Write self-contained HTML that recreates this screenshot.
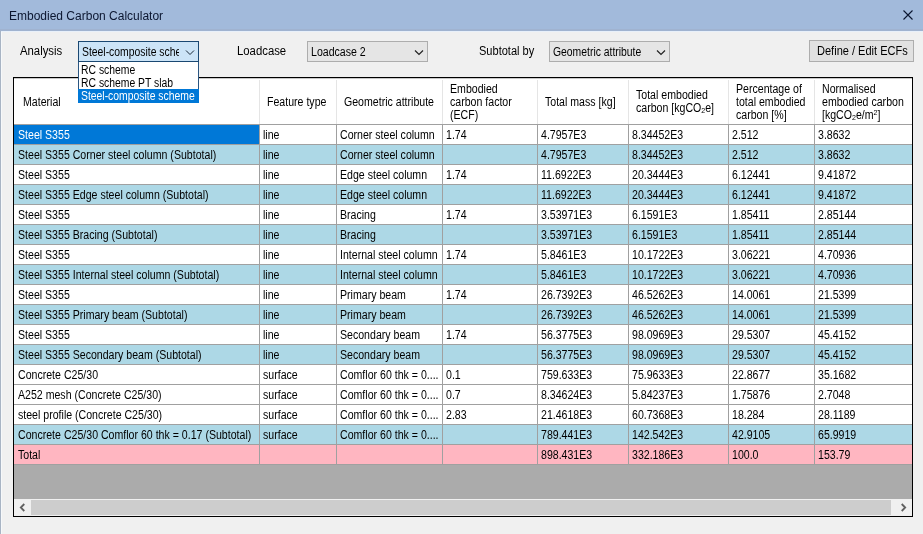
<!DOCTYPE html><html><head><meta charset="utf-8"><title>Embodied Carbon Calculator</title><style>
*{margin:0;padding:0;box-sizing:border-box}
html,body{width:923px;height:534px;overflow:hidden}
body{position:relative;background:#f0f0f0;font-family:"Liberation Sans",sans-serif;font-size:12px;color:#000}
.a{position:absolute}
.t{position:absolute;white-space:nowrap;transform-origin:0 0;transform:scaleX(0.882)}
.sub{font-size:8px;position:relative;top:1px;line-height:0;vertical-align:baseline}
.sup{font-size:8px;position:relative;top:-4px;line-height:0;vertical-align:baseline}
</style></head><body><div id="root" style="position:absolute;left:0;top:0;width:923px;height:534px;will-change:transform">
<div class="a" style="left:0;top:0;width:923px;height:31px;background:#a2badb"></div><div class="a" style="left:0;top:29px;width:923px;height:2px;background:#a0b3d0"></div>
<div class="a" style="left:0;top:31px;width:923px;height:1px;background:#e8f0fa"></div>
<div class="a" style="left:0;top:31px;width:1px;height:503px;background:#a8b4c4"></div>
<div class="a" style="left:1px;top:32px;width:1px;height:502px;background:#f6f8fa"></div>
<div class="a" style="left:9px;top:8px;line-height:16px;font-size:12px;color:#0b1630;white-space:nowrap">Embodied Carbon Calculator</div>
<svg class="a" style="left:900px;top:8px" width="16" height="14" viewBox="0 0 16 14"><path d="M3.5 2.5 L12.5 11.5 M12.5 2.5 L3.5 11.5" stroke="#0b1630" stroke-width="1.1" fill="none"/></svg>
<div class="t" style="left:20px;top:42px;line-height:19px;transform:scaleX(0.945);">Analysis</div>
<div class="t" style="left:236.5px;top:42px;line-height:19px;transform:scaleX(0.945);">Loadcase</div>
<div class="t" style="left:479px;top:42px;line-height:19px;transform:scaleX(0.92);">Subtotal by</div>
<div class="a" style="left:78px;top:41px;width:121px;height:21px;background:#cce4f7;border:1px solid #1a4872"></div>
<div class="a" style="left:79px;top:42px;width:100px;height:19px;overflow:hidden"><div class="t" style="left:3px;top:0.5px;line-height:19px;transform:scaleX(0.865);">Steel-composite scheme</div></div>
<svg class="a" style="left:185px;top:48.5px" width="10" height="7" viewBox="0 0 10 7"><path d="M1 1.5 L5 5.5 L9 1.5" stroke="#1a2a3a" stroke-width="1.0" fill="none"/></svg>
<div class="a" style="left:307px;top:41px;width:121px;height:21px;background:#e5e5e5;border:1px solid #adadad"></div>
<div class="t" style="left:311px;top:42.5px;line-height:19px;">Loadcase 2</div>
<svg class="a" style="left:414px;top:48.5px" width="10" height="7" viewBox="0 0 10 7"><path d="M1 1.5 L5 5.5 L9 1.5" stroke="#222" stroke-width="1.2" fill="none"/></svg>
<div class="a" style="left:549px;top:41px;width:121px;height:21px;background:#e5e5e5;border:1px solid #adadad"></div>
<div class="t" style="left:553px;top:42.5px;line-height:19px;transform:scaleX(0.865);">Geometric attribute</div>
<svg class="a" style="left:656px;top:48.5px" width="10" height="7" viewBox="0 0 10 7"><path d="M1 1.5 L5 5.5 L9 1.5" stroke="#222" stroke-width="1.2" fill="none"/></svg>
<div class="a" style="left:809px;top:40px;width:105px;height:22px;background:#e1e1e1;border:1px solid #adadad"></div>
<div class="t" style="left:816.8px;top:41px;line-height:20px;transform:scaleX(0.92);">Define / Edit ECFs</div>
<div class="a" style="left:13px;top:77px;width:900px;height:440px;border:1px solid #000;background:#ababab"></div>
<div class="a" style="left:14px;top:78px;width:898px;height:46px;background:#fff"></div>
<div class="a" style="left:14px;top:78px;width:898px;height:1px;background:#c8c8c8"></div>
<div class="a" style="left:14px;top:124px;width:898px;height:1px;background:#a0a0a0"></div>
<div class="a" style="left:259px;top:80px;width:1px;height:44px;background:#e5e5e5"></div>
<div class="a" style="left:336px;top:80px;width:1px;height:44px;background:#e5e5e5"></div>
<div class="a" style="left:442px;top:80px;width:1px;height:44px;background:#e5e5e5"></div>
<div class="a" style="left:537px;top:80px;width:1px;height:44px;background:#e5e5e5"></div>
<div class="a" style="left:628px;top:80px;width:1px;height:44px;background:#e5e5e5"></div>
<div class="a" style="left:728px;top:80px;width:1px;height:44px;background:#e5e5e5"></div>
<div class="a" style="left:814px;top:80px;width:1px;height:44px;background:#e5e5e5"></div>
<div class="t" style="left:22.5px;top:95.6px;line-height:13px;">Material</div>
<div class="t" style="left:267px;top:95.6px;line-height:13px;">Feature type</div>
<div class="t" style="left:344px;top:95.6px;line-height:13px;">Geometric attribute</div>
<div class="t" style="left:450px;top:82.6px;line-height:13px;">Embodied</div>
<div class="t" style="left:450px;top:95.6px;line-height:13px;">carbon factor</div>
<div class="t" style="left:450px;top:108.6px;line-height:13px;">(ECF)</div>
<div class="t" style="left:545px;top:95.6px;line-height:13px;">Total mass [kg]</div>
<div class="t" style="left:636px;top:89.1px;line-height:13px;">Total embodied</div>
<div class="t" style="left:636px;top:102.1px;line-height:13px;">carbon [kgCO<span class=sub>2</span>e]</div>
<div class="t" style="left:736px;top:82.6px;line-height:13px;">Percentage of</div>
<div class="t" style="left:736px;top:95.6px;line-height:13px;">total embodied</div>
<div class="t" style="left:736px;top:108.6px;line-height:13px;">carbon [%]</div>
<div class="t" style="left:822px;top:82.6px;line-height:13px;">Normalised</div>
<div class="t" style="left:822px;top:95.6px;line-height:13px;">embodied carbon</div>
<div class="t" style="left:822px;top:108.6px;line-height:13px;">[kgCO<span class=sub>2</span>e/m<span class=sup>2</span>]</div>
<div class="a" style="left:14px;top:125px;width:898px;height:20px;background:#fff"></div>
<div class="a" style="left:14px;top:144px;width:898px;height:1px;background:#a0a0a0"></div>
<div class="a" style="left:259px;top:125px;width:1px;height:20px;background:#a0a0a0"></div>
<div class="a" style="left:336px;top:125px;width:1px;height:20px;background:#a0a0a0"></div>
<div class="a" style="left:442px;top:125px;width:1px;height:20px;background:#a0a0a0"></div>
<div class="a" style="left:537px;top:125px;width:1px;height:20px;background:#a0a0a0"></div>
<div class="a" style="left:628px;top:125px;width:1px;height:20px;background:#a0a0a0"></div>
<div class="a" style="left:728px;top:125px;width:1px;height:20px;background:#a0a0a0"></div>
<div class="a" style="left:814px;top:125px;width:1px;height:20px;background:#a0a0a0"></div>
<div class="a" style="left:14px;top:125px;width:245px;height:19px;background:#0078d7"></div>
<div class="a" style="left:14px;top:125px;width:245px;height:19px;overflow:hidden"><div class="t" style="left:3.5px;top:1px;line-height:19px;color:#fff;">Steel S355</div></div>
<div class="a" style="left:260px;top:125px;width:76px;height:19px;overflow:hidden"><div class="t" style="left:3px;top:1px;line-height:19px;">line</div></div>
<div class="a" style="left:337px;top:125px;width:105px;height:19px;overflow:hidden"><div class="t" style="left:3px;top:1px;line-height:19px;">Corner steel column</div></div>
<div class="a" style="left:443px;top:125px;width:94px;height:19px;overflow:hidden"><div class="t" style="left:3px;top:1px;line-height:19px;">1.74</div></div>
<div class="a" style="left:538px;top:125px;width:90px;height:19px;overflow:hidden"><div class="t" style="left:3px;top:1px;line-height:19px;">4.7957E3</div></div>
<div class="a" style="left:629px;top:125px;width:99px;height:19px;overflow:hidden"><div class="t" style="left:3px;top:1px;line-height:19px;">8.34452E3</div></div>
<div class="a" style="left:729px;top:125px;width:85px;height:19px;overflow:hidden"><div class="t" style="left:3px;top:1px;line-height:19px;">2.512</div></div>
<div class="a" style="left:815px;top:125px;width:97px;height:19px;overflow:hidden"><div class="t" style="left:3px;top:1px;line-height:19px;">3.8632</div></div>
<div class="a" style="left:14px;top:145px;width:898px;height:20px;background:#add8e6"></div>
<div class="a" style="left:14px;top:164px;width:898px;height:1px;background:#a0a0a0"></div>
<div class="a" style="left:259px;top:145px;width:1px;height:20px;background:#a0a0a0"></div>
<div class="a" style="left:336px;top:145px;width:1px;height:20px;background:#a0a0a0"></div>
<div class="a" style="left:442px;top:145px;width:1px;height:20px;background:#a0a0a0"></div>
<div class="a" style="left:537px;top:145px;width:1px;height:20px;background:#a0a0a0"></div>
<div class="a" style="left:628px;top:145px;width:1px;height:20px;background:#a0a0a0"></div>
<div class="a" style="left:728px;top:145px;width:1px;height:20px;background:#a0a0a0"></div>
<div class="a" style="left:814px;top:145px;width:1px;height:20px;background:#a0a0a0"></div>
<div class="a" style="left:14px;top:145px;width:245px;height:19px;overflow:hidden"><div class="t" style="left:3.5px;top:1px;line-height:19px;">Steel S355 Corner steel column (Subtotal)</div></div>
<div class="a" style="left:260px;top:145px;width:76px;height:19px;overflow:hidden"><div class="t" style="left:3px;top:1px;line-height:19px;">line</div></div>
<div class="a" style="left:337px;top:145px;width:105px;height:19px;overflow:hidden"><div class="t" style="left:3px;top:1px;line-height:19px;">Corner steel column</div></div>
<div class="a" style="left:538px;top:145px;width:90px;height:19px;overflow:hidden"><div class="t" style="left:3px;top:1px;line-height:19px;">4.7957E3</div></div>
<div class="a" style="left:629px;top:145px;width:99px;height:19px;overflow:hidden"><div class="t" style="left:3px;top:1px;line-height:19px;">8.34452E3</div></div>
<div class="a" style="left:729px;top:145px;width:85px;height:19px;overflow:hidden"><div class="t" style="left:3px;top:1px;line-height:19px;">2.512</div></div>
<div class="a" style="left:815px;top:145px;width:97px;height:19px;overflow:hidden"><div class="t" style="left:3px;top:1px;line-height:19px;">3.8632</div></div>
<div class="a" style="left:14px;top:165px;width:898px;height:20px;background:#fff"></div>
<div class="a" style="left:14px;top:184px;width:898px;height:1px;background:#a0a0a0"></div>
<div class="a" style="left:259px;top:165px;width:1px;height:20px;background:#a0a0a0"></div>
<div class="a" style="left:336px;top:165px;width:1px;height:20px;background:#a0a0a0"></div>
<div class="a" style="left:442px;top:165px;width:1px;height:20px;background:#a0a0a0"></div>
<div class="a" style="left:537px;top:165px;width:1px;height:20px;background:#a0a0a0"></div>
<div class="a" style="left:628px;top:165px;width:1px;height:20px;background:#a0a0a0"></div>
<div class="a" style="left:728px;top:165px;width:1px;height:20px;background:#a0a0a0"></div>
<div class="a" style="left:814px;top:165px;width:1px;height:20px;background:#a0a0a0"></div>
<div class="a" style="left:14px;top:165px;width:245px;height:19px;overflow:hidden"><div class="t" style="left:3.5px;top:1px;line-height:19px;">Steel S355</div></div>
<div class="a" style="left:260px;top:165px;width:76px;height:19px;overflow:hidden"><div class="t" style="left:3px;top:1px;line-height:19px;">line</div></div>
<div class="a" style="left:337px;top:165px;width:105px;height:19px;overflow:hidden"><div class="t" style="left:3px;top:1px;line-height:19px;">Edge steel column</div></div>
<div class="a" style="left:443px;top:165px;width:94px;height:19px;overflow:hidden"><div class="t" style="left:3px;top:1px;line-height:19px;">1.74</div></div>
<div class="a" style="left:538px;top:165px;width:90px;height:19px;overflow:hidden"><div class="t" style="left:3px;top:1px;line-height:19px;">11.6922E3</div></div>
<div class="a" style="left:629px;top:165px;width:99px;height:19px;overflow:hidden"><div class="t" style="left:3px;top:1px;line-height:19px;">20.3444E3</div></div>
<div class="a" style="left:729px;top:165px;width:85px;height:19px;overflow:hidden"><div class="t" style="left:3px;top:1px;line-height:19px;">6.12441</div></div>
<div class="a" style="left:815px;top:165px;width:97px;height:19px;overflow:hidden"><div class="t" style="left:3px;top:1px;line-height:19px;">9.41872</div></div>
<div class="a" style="left:14px;top:185px;width:898px;height:20px;background:#add8e6"></div>
<div class="a" style="left:14px;top:204px;width:898px;height:1px;background:#a0a0a0"></div>
<div class="a" style="left:259px;top:185px;width:1px;height:20px;background:#a0a0a0"></div>
<div class="a" style="left:336px;top:185px;width:1px;height:20px;background:#a0a0a0"></div>
<div class="a" style="left:442px;top:185px;width:1px;height:20px;background:#a0a0a0"></div>
<div class="a" style="left:537px;top:185px;width:1px;height:20px;background:#a0a0a0"></div>
<div class="a" style="left:628px;top:185px;width:1px;height:20px;background:#a0a0a0"></div>
<div class="a" style="left:728px;top:185px;width:1px;height:20px;background:#a0a0a0"></div>
<div class="a" style="left:814px;top:185px;width:1px;height:20px;background:#a0a0a0"></div>
<div class="a" style="left:14px;top:185px;width:245px;height:19px;overflow:hidden"><div class="t" style="left:3.5px;top:1px;line-height:19px;">Steel S355 Edge steel column (Subtotal)</div></div>
<div class="a" style="left:260px;top:185px;width:76px;height:19px;overflow:hidden"><div class="t" style="left:3px;top:1px;line-height:19px;">line</div></div>
<div class="a" style="left:337px;top:185px;width:105px;height:19px;overflow:hidden"><div class="t" style="left:3px;top:1px;line-height:19px;">Edge steel column</div></div>
<div class="a" style="left:538px;top:185px;width:90px;height:19px;overflow:hidden"><div class="t" style="left:3px;top:1px;line-height:19px;">11.6922E3</div></div>
<div class="a" style="left:629px;top:185px;width:99px;height:19px;overflow:hidden"><div class="t" style="left:3px;top:1px;line-height:19px;">20.3444E3</div></div>
<div class="a" style="left:729px;top:185px;width:85px;height:19px;overflow:hidden"><div class="t" style="left:3px;top:1px;line-height:19px;">6.12441</div></div>
<div class="a" style="left:815px;top:185px;width:97px;height:19px;overflow:hidden"><div class="t" style="left:3px;top:1px;line-height:19px;">9.41872</div></div>
<div class="a" style="left:14px;top:205px;width:898px;height:20px;background:#fff"></div>
<div class="a" style="left:14px;top:224px;width:898px;height:1px;background:#a0a0a0"></div>
<div class="a" style="left:259px;top:205px;width:1px;height:20px;background:#a0a0a0"></div>
<div class="a" style="left:336px;top:205px;width:1px;height:20px;background:#a0a0a0"></div>
<div class="a" style="left:442px;top:205px;width:1px;height:20px;background:#a0a0a0"></div>
<div class="a" style="left:537px;top:205px;width:1px;height:20px;background:#a0a0a0"></div>
<div class="a" style="left:628px;top:205px;width:1px;height:20px;background:#a0a0a0"></div>
<div class="a" style="left:728px;top:205px;width:1px;height:20px;background:#a0a0a0"></div>
<div class="a" style="left:814px;top:205px;width:1px;height:20px;background:#a0a0a0"></div>
<div class="a" style="left:14px;top:205px;width:245px;height:19px;overflow:hidden"><div class="t" style="left:3.5px;top:1px;line-height:19px;">Steel S355</div></div>
<div class="a" style="left:260px;top:205px;width:76px;height:19px;overflow:hidden"><div class="t" style="left:3px;top:1px;line-height:19px;">line</div></div>
<div class="a" style="left:337px;top:205px;width:105px;height:19px;overflow:hidden"><div class="t" style="left:3px;top:1px;line-height:19px;">Bracing</div></div>
<div class="a" style="left:443px;top:205px;width:94px;height:19px;overflow:hidden"><div class="t" style="left:3px;top:1px;line-height:19px;">1.74</div></div>
<div class="a" style="left:538px;top:205px;width:90px;height:19px;overflow:hidden"><div class="t" style="left:3px;top:1px;line-height:19px;">3.53971E3</div></div>
<div class="a" style="left:629px;top:205px;width:99px;height:19px;overflow:hidden"><div class="t" style="left:3px;top:1px;line-height:19px;">6.1591E3</div></div>
<div class="a" style="left:729px;top:205px;width:85px;height:19px;overflow:hidden"><div class="t" style="left:3px;top:1px;line-height:19px;">1.85411</div></div>
<div class="a" style="left:815px;top:205px;width:97px;height:19px;overflow:hidden"><div class="t" style="left:3px;top:1px;line-height:19px;">2.85144</div></div>
<div class="a" style="left:14px;top:225px;width:898px;height:20px;background:#add8e6"></div>
<div class="a" style="left:14px;top:244px;width:898px;height:1px;background:#a0a0a0"></div>
<div class="a" style="left:259px;top:225px;width:1px;height:20px;background:#a0a0a0"></div>
<div class="a" style="left:336px;top:225px;width:1px;height:20px;background:#a0a0a0"></div>
<div class="a" style="left:442px;top:225px;width:1px;height:20px;background:#a0a0a0"></div>
<div class="a" style="left:537px;top:225px;width:1px;height:20px;background:#a0a0a0"></div>
<div class="a" style="left:628px;top:225px;width:1px;height:20px;background:#a0a0a0"></div>
<div class="a" style="left:728px;top:225px;width:1px;height:20px;background:#a0a0a0"></div>
<div class="a" style="left:814px;top:225px;width:1px;height:20px;background:#a0a0a0"></div>
<div class="a" style="left:14px;top:225px;width:245px;height:19px;overflow:hidden"><div class="t" style="left:3.5px;top:1px;line-height:19px;">Steel S355 Bracing (Subtotal)</div></div>
<div class="a" style="left:260px;top:225px;width:76px;height:19px;overflow:hidden"><div class="t" style="left:3px;top:1px;line-height:19px;">line</div></div>
<div class="a" style="left:337px;top:225px;width:105px;height:19px;overflow:hidden"><div class="t" style="left:3px;top:1px;line-height:19px;">Bracing</div></div>
<div class="a" style="left:538px;top:225px;width:90px;height:19px;overflow:hidden"><div class="t" style="left:3px;top:1px;line-height:19px;">3.53971E3</div></div>
<div class="a" style="left:629px;top:225px;width:99px;height:19px;overflow:hidden"><div class="t" style="left:3px;top:1px;line-height:19px;">6.1591E3</div></div>
<div class="a" style="left:729px;top:225px;width:85px;height:19px;overflow:hidden"><div class="t" style="left:3px;top:1px;line-height:19px;">1.85411</div></div>
<div class="a" style="left:815px;top:225px;width:97px;height:19px;overflow:hidden"><div class="t" style="left:3px;top:1px;line-height:19px;">2.85144</div></div>
<div class="a" style="left:14px;top:245px;width:898px;height:20px;background:#fff"></div>
<div class="a" style="left:14px;top:264px;width:898px;height:1px;background:#a0a0a0"></div>
<div class="a" style="left:259px;top:245px;width:1px;height:20px;background:#a0a0a0"></div>
<div class="a" style="left:336px;top:245px;width:1px;height:20px;background:#a0a0a0"></div>
<div class="a" style="left:442px;top:245px;width:1px;height:20px;background:#a0a0a0"></div>
<div class="a" style="left:537px;top:245px;width:1px;height:20px;background:#a0a0a0"></div>
<div class="a" style="left:628px;top:245px;width:1px;height:20px;background:#a0a0a0"></div>
<div class="a" style="left:728px;top:245px;width:1px;height:20px;background:#a0a0a0"></div>
<div class="a" style="left:814px;top:245px;width:1px;height:20px;background:#a0a0a0"></div>
<div class="a" style="left:14px;top:245px;width:245px;height:19px;overflow:hidden"><div class="t" style="left:3.5px;top:1px;line-height:19px;">Steel S355</div></div>
<div class="a" style="left:260px;top:245px;width:76px;height:19px;overflow:hidden"><div class="t" style="left:3px;top:1px;line-height:19px;">line</div></div>
<div class="a" style="left:337px;top:245px;width:105px;height:19px;overflow:hidden"><div class="t" style="left:3px;top:1px;line-height:19px;">Internal steel column</div></div>
<div class="a" style="left:443px;top:245px;width:94px;height:19px;overflow:hidden"><div class="t" style="left:3px;top:1px;line-height:19px;">1.74</div></div>
<div class="a" style="left:538px;top:245px;width:90px;height:19px;overflow:hidden"><div class="t" style="left:3px;top:1px;line-height:19px;">5.8461E3</div></div>
<div class="a" style="left:629px;top:245px;width:99px;height:19px;overflow:hidden"><div class="t" style="left:3px;top:1px;line-height:19px;">10.1722E3</div></div>
<div class="a" style="left:729px;top:245px;width:85px;height:19px;overflow:hidden"><div class="t" style="left:3px;top:1px;line-height:19px;">3.06221</div></div>
<div class="a" style="left:815px;top:245px;width:97px;height:19px;overflow:hidden"><div class="t" style="left:3px;top:1px;line-height:19px;">4.70936</div></div>
<div class="a" style="left:14px;top:265px;width:898px;height:20px;background:#add8e6"></div>
<div class="a" style="left:14px;top:284px;width:898px;height:1px;background:#a0a0a0"></div>
<div class="a" style="left:259px;top:265px;width:1px;height:20px;background:#a0a0a0"></div>
<div class="a" style="left:336px;top:265px;width:1px;height:20px;background:#a0a0a0"></div>
<div class="a" style="left:442px;top:265px;width:1px;height:20px;background:#a0a0a0"></div>
<div class="a" style="left:537px;top:265px;width:1px;height:20px;background:#a0a0a0"></div>
<div class="a" style="left:628px;top:265px;width:1px;height:20px;background:#a0a0a0"></div>
<div class="a" style="left:728px;top:265px;width:1px;height:20px;background:#a0a0a0"></div>
<div class="a" style="left:814px;top:265px;width:1px;height:20px;background:#a0a0a0"></div>
<div class="a" style="left:14px;top:265px;width:245px;height:19px;overflow:hidden"><div class="t" style="left:3.5px;top:1px;line-height:19px;">Steel S355 Internal steel column (Subtotal)</div></div>
<div class="a" style="left:260px;top:265px;width:76px;height:19px;overflow:hidden"><div class="t" style="left:3px;top:1px;line-height:19px;">line</div></div>
<div class="a" style="left:337px;top:265px;width:105px;height:19px;overflow:hidden"><div class="t" style="left:3px;top:1px;line-height:19px;">Internal steel column</div></div>
<div class="a" style="left:538px;top:265px;width:90px;height:19px;overflow:hidden"><div class="t" style="left:3px;top:1px;line-height:19px;">5.8461E3</div></div>
<div class="a" style="left:629px;top:265px;width:99px;height:19px;overflow:hidden"><div class="t" style="left:3px;top:1px;line-height:19px;">10.1722E3</div></div>
<div class="a" style="left:729px;top:265px;width:85px;height:19px;overflow:hidden"><div class="t" style="left:3px;top:1px;line-height:19px;">3.06221</div></div>
<div class="a" style="left:815px;top:265px;width:97px;height:19px;overflow:hidden"><div class="t" style="left:3px;top:1px;line-height:19px;">4.70936</div></div>
<div class="a" style="left:14px;top:285px;width:898px;height:20px;background:#fff"></div>
<div class="a" style="left:14px;top:304px;width:898px;height:1px;background:#a0a0a0"></div>
<div class="a" style="left:259px;top:285px;width:1px;height:20px;background:#a0a0a0"></div>
<div class="a" style="left:336px;top:285px;width:1px;height:20px;background:#a0a0a0"></div>
<div class="a" style="left:442px;top:285px;width:1px;height:20px;background:#a0a0a0"></div>
<div class="a" style="left:537px;top:285px;width:1px;height:20px;background:#a0a0a0"></div>
<div class="a" style="left:628px;top:285px;width:1px;height:20px;background:#a0a0a0"></div>
<div class="a" style="left:728px;top:285px;width:1px;height:20px;background:#a0a0a0"></div>
<div class="a" style="left:814px;top:285px;width:1px;height:20px;background:#a0a0a0"></div>
<div class="a" style="left:14px;top:285px;width:245px;height:19px;overflow:hidden"><div class="t" style="left:3.5px;top:1px;line-height:19px;">Steel S355</div></div>
<div class="a" style="left:260px;top:285px;width:76px;height:19px;overflow:hidden"><div class="t" style="left:3px;top:1px;line-height:19px;">line</div></div>
<div class="a" style="left:337px;top:285px;width:105px;height:19px;overflow:hidden"><div class="t" style="left:3px;top:1px;line-height:19px;">Primary beam</div></div>
<div class="a" style="left:443px;top:285px;width:94px;height:19px;overflow:hidden"><div class="t" style="left:3px;top:1px;line-height:19px;">1.74</div></div>
<div class="a" style="left:538px;top:285px;width:90px;height:19px;overflow:hidden"><div class="t" style="left:3px;top:1px;line-height:19px;">26.7392E3</div></div>
<div class="a" style="left:629px;top:285px;width:99px;height:19px;overflow:hidden"><div class="t" style="left:3px;top:1px;line-height:19px;">46.5262E3</div></div>
<div class="a" style="left:729px;top:285px;width:85px;height:19px;overflow:hidden"><div class="t" style="left:3px;top:1px;line-height:19px;">14.0061</div></div>
<div class="a" style="left:815px;top:285px;width:97px;height:19px;overflow:hidden"><div class="t" style="left:3px;top:1px;line-height:19px;">21.5399</div></div>
<div class="a" style="left:14px;top:305px;width:898px;height:20px;background:#add8e6"></div>
<div class="a" style="left:14px;top:324px;width:898px;height:1px;background:#a0a0a0"></div>
<div class="a" style="left:259px;top:305px;width:1px;height:20px;background:#a0a0a0"></div>
<div class="a" style="left:336px;top:305px;width:1px;height:20px;background:#a0a0a0"></div>
<div class="a" style="left:442px;top:305px;width:1px;height:20px;background:#a0a0a0"></div>
<div class="a" style="left:537px;top:305px;width:1px;height:20px;background:#a0a0a0"></div>
<div class="a" style="left:628px;top:305px;width:1px;height:20px;background:#a0a0a0"></div>
<div class="a" style="left:728px;top:305px;width:1px;height:20px;background:#a0a0a0"></div>
<div class="a" style="left:814px;top:305px;width:1px;height:20px;background:#a0a0a0"></div>
<div class="a" style="left:14px;top:305px;width:245px;height:19px;overflow:hidden"><div class="t" style="left:3.5px;top:1px;line-height:19px;">Steel S355 Primary beam (Subtotal)</div></div>
<div class="a" style="left:260px;top:305px;width:76px;height:19px;overflow:hidden"><div class="t" style="left:3px;top:1px;line-height:19px;">line</div></div>
<div class="a" style="left:337px;top:305px;width:105px;height:19px;overflow:hidden"><div class="t" style="left:3px;top:1px;line-height:19px;">Primary beam</div></div>
<div class="a" style="left:538px;top:305px;width:90px;height:19px;overflow:hidden"><div class="t" style="left:3px;top:1px;line-height:19px;">26.7392E3</div></div>
<div class="a" style="left:629px;top:305px;width:99px;height:19px;overflow:hidden"><div class="t" style="left:3px;top:1px;line-height:19px;">46.5262E3</div></div>
<div class="a" style="left:729px;top:305px;width:85px;height:19px;overflow:hidden"><div class="t" style="left:3px;top:1px;line-height:19px;">14.0061</div></div>
<div class="a" style="left:815px;top:305px;width:97px;height:19px;overflow:hidden"><div class="t" style="left:3px;top:1px;line-height:19px;">21.5399</div></div>
<div class="a" style="left:14px;top:325px;width:898px;height:20px;background:#fff"></div>
<div class="a" style="left:14px;top:344px;width:898px;height:1px;background:#a0a0a0"></div>
<div class="a" style="left:259px;top:325px;width:1px;height:20px;background:#a0a0a0"></div>
<div class="a" style="left:336px;top:325px;width:1px;height:20px;background:#a0a0a0"></div>
<div class="a" style="left:442px;top:325px;width:1px;height:20px;background:#a0a0a0"></div>
<div class="a" style="left:537px;top:325px;width:1px;height:20px;background:#a0a0a0"></div>
<div class="a" style="left:628px;top:325px;width:1px;height:20px;background:#a0a0a0"></div>
<div class="a" style="left:728px;top:325px;width:1px;height:20px;background:#a0a0a0"></div>
<div class="a" style="left:814px;top:325px;width:1px;height:20px;background:#a0a0a0"></div>
<div class="a" style="left:14px;top:325px;width:245px;height:19px;overflow:hidden"><div class="t" style="left:3.5px;top:1px;line-height:19px;">Steel S355</div></div>
<div class="a" style="left:260px;top:325px;width:76px;height:19px;overflow:hidden"><div class="t" style="left:3px;top:1px;line-height:19px;">line</div></div>
<div class="a" style="left:337px;top:325px;width:105px;height:19px;overflow:hidden"><div class="t" style="left:3px;top:1px;line-height:19px;">Secondary beam</div></div>
<div class="a" style="left:443px;top:325px;width:94px;height:19px;overflow:hidden"><div class="t" style="left:3px;top:1px;line-height:19px;">1.74</div></div>
<div class="a" style="left:538px;top:325px;width:90px;height:19px;overflow:hidden"><div class="t" style="left:3px;top:1px;line-height:19px;">56.3775E3</div></div>
<div class="a" style="left:629px;top:325px;width:99px;height:19px;overflow:hidden"><div class="t" style="left:3px;top:1px;line-height:19px;">98.0969E3</div></div>
<div class="a" style="left:729px;top:325px;width:85px;height:19px;overflow:hidden"><div class="t" style="left:3px;top:1px;line-height:19px;">29.5307</div></div>
<div class="a" style="left:815px;top:325px;width:97px;height:19px;overflow:hidden"><div class="t" style="left:3px;top:1px;line-height:19px;">45.4152</div></div>
<div class="a" style="left:14px;top:345px;width:898px;height:20px;background:#add8e6"></div>
<div class="a" style="left:14px;top:364px;width:898px;height:1px;background:#a0a0a0"></div>
<div class="a" style="left:259px;top:345px;width:1px;height:20px;background:#a0a0a0"></div>
<div class="a" style="left:336px;top:345px;width:1px;height:20px;background:#a0a0a0"></div>
<div class="a" style="left:442px;top:345px;width:1px;height:20px;background:#a0a0a0"></div>
<div class="a" style="left:537px;top:345px;width:1px;height:20px;background:#a0a0a0"></div>
<div class="a" style="left:628px;top:345px;width:1px;height:20px;background:#a0a0a0"></div>
<div class="a" style="left:728px;top:345px;width:1px;height:20px;background:#a0a0a0"></div>
<div class="a" style="left:814px;top:345px;width:1px;height:20px;background:#a0a0a0"></div>
<div class="a" style="left:14px;top:345px;width:245px;height:19px;overflow:hidden"><div class="t" style="left:3.5px;top:1px;line-height:19px;">Steel S355 Secondary beam (Subtotal)</div></div>
<div class="a" style="left:260px;top:345px;width:76px;height:19px;overflow:hidden"><div class="t" style="left:3px;top:1px;line-height:19px;">line</div></div>
<div class="a" style="left:337px;top:345px;width:105px;height:19px;overflow:hidden"><div class="t" style="left:3px;top:1px;line-height:19px;">Secondary beam</div></div>
<div class="a" style="left:538px;top:345px;width:90px;height:19px;overflow:hidden"><div class="t" style="left:3px;top:1px;line-height:19px;">56.3775E3</div></div>
<div class="a" style="left:629px;top:345px;width:99px;height:19px;overflow:hidden"><div class="t" style="left:3px;top:1px;line-height:19px;">98.0969E3</div></div>
<div class="a" style="left:729px;top:345px;width:85px;height:19px;overflow:hidden"><div class="t" style="left:3px;top:1px;line-height:19px;">29.5307</div></div>
<div class="a" style="left:815px;top:345px;width:97px;height:19px;overflow:hidden"><div class="t" style="left:3px;top:1px;line-height:19px;">45.4152</div></div>
<div class="a" style="left:14px;top:365px;width:898px;height:20px;background:#fff"></div>
<div class="a" style="left:14px;top:384px;width:898px;height:1px;background:#a0a0a0"></div>
<div class="a" style="left:259px;top:365px;width:1px;height:20px;background:#a0a0a0"></div>
<div class="a" style="left:336px;top:365px;width:1px;height:20px;background:#a0a0a0"></div>
<div class="a" style="left:442px;top:365px;width:1px;height:20px;background:#a0a0a0"></div>
<div class="a" style="left:537px;top:365px;width:1px;height:20px;background:#a0a0a0"></div>
<div class="a" style="left:628px;top:365px;width:1px;height:20px;background:#a0a0a0"></div>
<div class="a" style="left:728px;top:365px;width:1px;height:20px;background:#a0a0a0"></div>
<div class="a" style="left:814px;top:365px;width:1px;height:20px;background:#a0a0a0"></div>
<div class="a" style="left:14px;top:365px;width:245px;height:19px;overflow:hidden"><div class="t" style="left:3.5px;top:1px;line-height:19px;">Concrete C25/30</div></div>
<div class="a" style="left:260px;top:365px;width:76px;height:19px;overflow:hidden"><div class="t" style="left:3px;top:1px;line-height:19px;">surface</div></div>
<div class="a" style="left:337px;top:365px;width:105px;height:19px;overflow:hidden"><div class="t" style="left:3px;top:1px;line-height:19px;">Comflor 60 thk = 0....</div></div>
<div class="a" style="left:443px;top:365px;width:94px;height:19px;overflow:hidden"><div class="t" style="left:3px;top:1px;line-height:19px;">0.1</div></div>
<div class="a" style="left:538px;top:365px;width:90px;height:19px;overflow:hidden"><div class="t" style="left:3px;top:1px;line-height:19px;">759.633E3</div></div>
<div class="a" style="left:629px;top:365px;width:99px;height:19px;overflow:hidden"><div class="t" style="left:3px;top:1px;line-height:19px;">75.9633E3</div></div>
<div class="a" style="left:729px;top:365px;width:85px;height:19px;overflow:hidden"><div class="t" style="left:3px;top:1px;line-height:19px;">22.8677</div></div>
<div class="a" style="left:815px;top:365px;width:97px;height:19px;overflow:hidden"><div class="t" style="left:3px;top:1px;line-height:19px;">35.1682</div></div>
<div class="a" style="left:14px;top:385px;width:898px;height:20px;background:#fff"></div>
<div class="a" style="left:14px;top:404px;width:898px;height:1px;background:#a0a0a0"></div>
<div class="a" style="left:259px;top:385px;width:1px;height:20px;background:#a0a0a0"></div>
<div class="a" style="left:336px;top:385px;width:1px;height:20px;background:#a0a0a0"></div>
<div class="a" style="left:442px;top:385px;width:1px;height:20px;background:#a0a0a0"></div>
<div class="a" style="left:537px;top:385px;width:1px;height:20px;background:#a0a0a0"></div>
<div class="a" style="left:628px;top:385px;width:1px;height:20px;background:#a0a0a0"></div>
<div class="a" style="left:728px;top:385px;width:1px;height:20px;background:#a0a0a0"></div>
<div class="a" style="left:814px;top:385px;width:1px;height:20px;background:#a0a0a0"></div>
<div class="a" style="left:14px;top:385px;width:245px;height:19px;overflow:hidden"><div class="t" style="left:3.5px;top:1px;line-height:19px;">A252 mesh (Concrete C25/30)</div></div>
<div class="a" style="left:260px;top:385px;width:76px;height:19px;overflow:hidden"><div class="t" style="left:3px;top:1px;line-height:19px;">surface</div></div>
<div class="a" style="left:337px;top:385px;width:105px;height:19px;overflow:hidden"><div class="t" style="left:3px;top:1px;line-height:19px;">Comflor 60 thk = 0....</div></div>
<div class="a" style="left:443px;top:385px;width:94px;height:19px;overflow:hidden"><div class="t" style="left:3px;top:1px;line-height:19px;">0.7</div></div>
<div class="a" style="left:538px;top:385px;width:90px;height:19px;overflow:hidden"><div class="t" style="left:3px;top:1px;line-height:19px;">8.34624E3</div></div>
<div class="a" style="left:629px;top:385px;width:99px;height:19px;overflow:hidden"><div class="t" style="left:3px;top:1px;line-height:19px;">5.84237E3</div></div>
<div class="a" style="left:729px;top:385px;width:85px;height:19px;overflow:hidden"><div class="t" style="left:3px;top:1px;line-height:19px;">1.75876</div></div>
<div class="a" style="left:815px;top:385px;width:97px;height:19px;overflow:hidden"><div class="t" style="left:3px;top:1px;line-height:19px;">2.7048</div></div>
<div class="a" style="left:14px;top:405px;width:898px;height:20px;background:#fff"></div>
<div class="a" style="left:14px;top:424px;width:898px;height:1px;background:#a0a0a0"></div>
<div class="a" style="left:259px;top:405px;width:1px;height:20px;background:#a0a0a0"></div>
<div class="a" style="left:336px;top:405px;width:1px;height:20px;background:#a0a0a0"></div>
<div class="a" style="left:442px;top:405px;width:1px;height:20px;background:#a0a0a0"></div>
<div class="a" style="left:537px;top:405px;width:1px;height:20px;background:#a0a0a0"></div>
<div class="a" style="left:628px;top:405px;width:1px;height:20px;background:#a0a0a0"></div>
<div class="a" style="left:728px;top:405px;width:1px;height:20px;background:#a0a0a0"></div>
<div class="a" style="left:814px;top:405px;width:1px;height:20px;background:#a0a0a0"></div>
<div class="a" style="left:14px;top:405px;width:245px;height:19px;overflow:hidden"><div class="t" style="left:3.5px;top:1px;line-height:19px;">steel profile (Concrete C25/30)</div></div>
<div class="a" style="left:260px;top:405px;width:76px;height:19px;overflow:hidden"><div class="t" style="left:3px;top:1px;line-height:19px;">surface</div></div>
<div class="a" style="left:337px;top:405px;width:105px;height:19px;overflow:hidden"><div class="t" style="left:3px;top:1px;line-height:19px;">Comflor 60 thk = 0....</div></div>
<div class="a" style="left:443px;top:405px;width:94px;height:19px;overflow:hidden"><div class="t" style="left:3px;top:1px;line-height:19px;">2.83</div></div>
<div class="a" style="left:538px;top:405px;width:90px;height:19px;overflow:hidden"><div class="t" style="left:3px;top:1px;line-height:19px;">21.4618E3</div></div>
<div class="a" style="left:629px;top:405px;width:99px;height:19px;overflow:hidden"><div class="t" style="left:3px;top:1px;line-height:19px;">60.7368E3</div></div>
<div class="a" style="left:729px;top:405px;width:85px;height:19px;overflow:hidden"><div class="t" style="left:3px;top:1px;line-height:19px;">18.284</div></div>
<div class="a" style="left:815px;top:405px;width:97px;height:19px;overflow:hidden"><div class="t" style="left:3px;top:1px;line-height:19px;">28.1189</div></div>
<div class="a" style="left:14px;top:425px;width:898px;height:20px;background:#add8e6"></div>
<div class="a" style="left:14px;top:444px;width:898px;height:1px;background:#a0a0a0"></div>
<div class="a" style="left:259px;top:425px;width:1px;height:20px;background:#a0a0a0"></div>
<div class="a" style="left:336px;top:425px;width:1px;height:20px;background:#a0a0a0"></div>
<div class="a" style="left:442px;top:425px;width:1px;height:20px;background:#a0a0a0"></div>
<div class="a" style="left:537px;top:425px;width:1px;height:20px;background:#a0a0a0"></div>
<div class="a" style="left:628px;top:425px;width:1px;height:20px;background:#a0a0a0"></div>
<div class="a" style="left:728px;top:425px;width:1px;height:20px;background:#a0a0a0"></div>
<div class="a" style="left:814px;top:425px;width:1px;height:20px;background:#a0a0a0"></div>
<div class="a" style="left:14px;top:425px;width:245px;height:19px;overflow:hidden"><div class="t" style="left:3.5px;top:1px;line-height:19px;">Concrete C25/30 Comflor 60 thk = 0.17 (Subtotal)</div></div>
<div class="a" style="left:260px;top:425px;width:76px;height:19px;overflow:hidden"><div class="t" style="left:3px;top:1px;line-height:19px;">surface</div></div>
<div class="a" style="left:337px;top:425px;width:105px;height:19px;overflow:hidden"><div class="t" style="left:3px;top:1px;line-height:19px;">Comflor 60 thk = 0....</div></div>
<div class="a" style="left:538px;top:425px;width:90px;height:19px;overflow:hidden"><div class="t" style="left:3px;top:1px;line-height:19px;">789.441E3</div></div>
<div class="a" style="left:629px;top:425px;width:99px;height:19px;overflow:hidden"><div class="t" style="left:3px;top:1px;line-height:19px;">142.542E3</div></div>
<div class="a" style="left:729px;top:425px;width:85px;height:19px;overflow:hidden"><div class="t" style="left:3px;top:1px;line-height:19px;">42.9105</div></div>
<div class="a" style="left:815px;top:425px;width:97px;height:19px;overflow:hidden"><div class="t" style="left:3px;top:1px;line-height:19px;">65.9919</div></div>
<div class="a" style="left:14px;top:445px;width:898px;height:20px;background:#ffb6c1"></div>
<div class="a" style="left:14px;top:464px;width:898px;height:1px;background:#a0a0a0"></div>
<div class="a" style="left:259px;top:445px;width:1px;height:20px;background:#a0a0a0"></div>
<div class="a" style="left:336px;top:445px;width:1px;height:20px;background:#a0a0a0"></div>
<div class="a" style="left:442px;top:445px;width:1px;height:20px;background:#a0a0a0"></div>
<div class="a" style="left:537px;top:445px;width:1px;height:20px;background:#a0a0a0"></div>
<div class="a" style="left:628px;top:445px;width:1px;height:20px;background:#a0a0a0"></div>
<div class="a" style="left:728px;top:445px;width:1px;height:20px;background:#a0a0a0"></div>
<div class="a" style="left:814px;top:445px;width:1px;height:20px;background:#a0a0a0"></div>
<div class="a" style="left:14px;top:445px;width:245px;height:19px;overflow:hidden"><div class="t" style="left:3.5px;top:1px;line-height:19px;">Total</div></div>
<div class="a" style="left:538px;top:445px;width:90px;height:19px;overflow:hidden"><div class="t" style="left:3px;top:1px;line-height:19px;">898.431E3</div></div>
<div class="a" style="left:629px;top:445px;width:99px;height:19px;overflow:hidden"><div class="t" style="left:3px;top:1px;line-height:19px;">332.186E3</div></div>
<div class="a" style="left:729px;top:445px;width:85px;height:19px;overflow:hidden"><div class="t" style="left:3px;top:1px;line-height:19px;">100.0</div></div>
<div class="a" style="left:815px;top:445px;width:97px;height:19px;overflow:hidden"><div class="t" style="left:3px;top:1px;line-height:19px;">153.79</div></div>
<div class="a" style="left:14px;top:499px;width:898px;height:17px;background:#f0f0f0"></div>
<div class="a" style="left:31px;top:500px;width:860px;height:15px;background:#cdcdcd"></div>
<svg class="a" style="left:14px;top:499px" width="17" height="17" viewBox="0 0 17 17"><path d="M10.3 5 L6.8 8.5 L10.3 12" stroke="#606060" stroke-width="1.8" fill="none"/></svg>
<svg class="a" style="left:895px;top:499px" width="17" height="17" viewBox="0 0 17 17"><path d="M6.7 5 L10.2 8.5 L6.7 12" stroke="#606060" stroke-width="1.8" fill="none"/></svg>
<div class="a" style="left:78px;top:62px;width:121px;height:41px;background:#fff;border:1px solid #2a5580;border-top:none"></div>
<div class="a" style="left:78px;top:89px;width:121px;height:14px;background:#0078d7"></div>
<div class="t" style="left:81.3px;top:64px;line-height:13px;transform:scaleX(0.865);">RC scheme</div>
<div class="t" style="left:81.3px;top:77px;line-height:13px;transform:scaleX(0.865);">RC scheme PT slab</div>
<div class="t" style="left:81.3px;top:90px;line-height:13px;transform:scaleX(0.865);color:#fff;">Steel-composite scheme</div>
</div></body></html>
